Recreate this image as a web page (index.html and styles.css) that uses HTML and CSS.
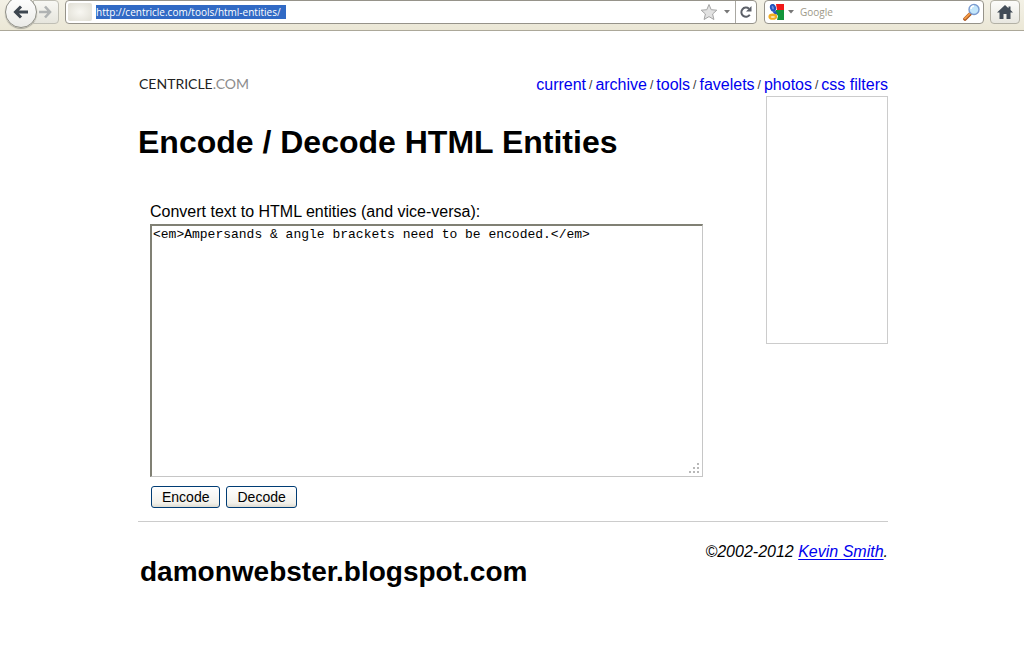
FILE: index.html
```html
<!DOCTYPE html>
<html lang="en">
<head>
<meta charset="utf-8">
<title>Encode / Decode HTML Entities</title>
<link rel="stylesheet" href="styles.css">
</head>
<body>
<div class="toolbar">
  <div class="history">
    <button class="back" type="button" aria-label="Back"><svg width="16" height="14" viewBox="0 0 16 14"><path d="M8 1.500 2.500 7 8 12.500M3 7h12" fill="none" stroke="#3d4650" stroke-width="3"/></svg></button>
    <button class="forward" type="button" aria-label="Forward"><svg width="14" height="14" viewBox="0 0 14 14"><path d="M7 1.500 12 7l-5 5.500M1 7h10.500" fill="none" stroke="#b0b3b3" stroke-width="2.600"/></svg></button>
  </div>
  <div class="address">
    <span class="identity"></span>
    <input class="url" type="text" aria-label="Address" value="http://centricle.com/tools/html-entities/">
    <button class="plain" type="button" aria-label="Bookmark"><svg width="18" height="18" viewBox="0 0 18 18"><path d="m9 1.500 2.200 5.200 5.600.5-4.200 3.800 1.300 5.500L9 13.600l-4.900 2.900L5.400 11 1.200 7.200l5.600-.5z" fill="#e2e2e2" stroke="#a5a5a5"/></svg></button>
    <button class="plain" type="button" aria-label="History"><svg width="6" height="4" viewBox="0 0 6 4"><path d="M0 0h6L3 3.500z" fill="#777"/></svg></button>
    <button class="plain reload" type="button" aria-label="Reload"><svg width="14" height="14" viewBox="0 0 14 14"><path d="M10 3.700A4.600 4.600 0 1 0 10.800 9.700" fill="none" stroke="#5c6068" stroke-width="2"/><path d="M12.500 1v5.500H7z" fill="#5c6068"/></svg></button>
  </div>
  <div class="search">
    <button class="plain engine" type="button" aria-label="Search engine"><svg width="16" height="16" viewBox="0 0 16 16"><path d="M8 0h8v6H9z" fill="#f11818"/><path d="M8 6h8v10H9l1-4-3-4z" fill="#12953b"/><ellipse cx="5" cy="3.800" rx="3" ry="3.900" transform="rotate(-18 5 3.800)" fill="#2453bd"/><ellipse cx="4.800" cy="3.600" rx="1" ry="2" transform="rotate(-18 4.800 3.600)" fill="#6f91dc"/><path d="m4.500 7.500 3-.5 2 3-2.500 1z" fill="#2453bd"/><ellipse cx="4.800" cy="12.700" rx="4.400" ry="3.100" fill="#f1ad20"/><ellipse cx="4.800" cy="12.900" rx="2.200" ry="1" fill="#fbe3ad"/></svg><svg width="6" height="4" viewBox="0 0 6 4"><path d="M0 0h6L3 3.500z" fill="#777"/></svg></button>
    <input class="query" type="text" aria-label="Search" placeholder="Google">
    <button class="plain go" type="button" aria-label="Go"><svg width="18" height="18" viewBox="0 0 18 18"><path d="m2 16 5-5" stroke="#a6521d" stroke-width="3.600" stroke-linecap="round"/><path d="m2 15.500 4.500-4.500" stroke="#f39a45" stroke-width="2" stroke-linecap="round"/><circle cx="11" cy="6.500" r="5" fill="#c3e6fb" stroke="#7b9bd0" stroke-width="1.400"/><path d="M8 6a3 3 0 0 1 3-3" fill="none" stroke="#fff" stroke-width="1.500"/></svg></button>
  </div>
  <button class="home" type="button" aria-label="Home"><svg width="16" height="14" viewBox="0 0 16 14"><path d="M8 0 0 7.500h2.500V14h4V9h3v5h4V7.500H16l-2.500-2.400V1.500h-2v1.700z" fill="#424c57"/></svg></button>
</div>
<div class="page">
  <header class="masthead">
    <div class="logo">CENTRICLE<span>.COM</span></div>
    <nav class="nav"><a href="#">current</a><i>/</i><a href="#">archive</a><i>/</i><a href="#">tools</a><i>/</i><a href="#">favelets</a><i>/</i><a href="#">photos</a><i>/</i><a href="#">css filters</a></nav>
  </header>
  <div class="columns">
    <main class="main">
      <h1>Encode / Decode HTML Entities</h1>
      <form class="form">
        <label for="text">Convert text to HTML entities (and vice-versa):</label>
        <div class="field">
          <textarea id="text" spellcheck="false">&lt;em&gt;Ampersands &amp; angle brackets need to be encoded.&lt;/em&gt;</textarea>
          <svg class="grip" width="11" height="11" viewBox="0 0 11 11"><path d="M8 0h2v2H8zM4 4h2v2H4zM8 4h2v2H8zM0 8h2v2H0zM4 8h2v2H4zM8 8h2v2H8z" fill="#b8b8b8"/></svg>
        </div>
        <div class="actions"><button type="button">Encode</button><button type="button">Decode</button></div>
      </form>
    </main>
    <aside class="ad"></aside>
  </div>
  <footer class="footer">
    <p class="credit">damonwebster.blogspot.com</p>
    <p class="copyright">©2002-2012 <a href="#">Kevin Smith</a>.</p>
  </footer>
</div>
</body>
</html>
```
FILE: styles.css
```css
* { box-sizing: border-box; }
body { margin: 0; background: #fff; color: #000; font: 16px/20px "Liberation Sans", Arial, sans-serif; }
button, input, textarea { margin: 0; font: inherit; }
svg { display: block; flex: none; }

.toolbar { display: flex; align-items: flex-start; height: 31px; padding: 0 4px 0 5px; background: linear-gradient(#f3f1e6, #ebe7d6); border-bottom: 1px solid #aca899; }
.history { display: flex; width: 54px; margin-right: 6px; }
.back { display: grid; place-items: center; z-index: 1; flex: none; width: 32px; height: 32px; margin-top: -4px; padding: 0; border: 1px solid #8e8e86; border-radius: 50%; background: linear-gradient(#fff, #ebebe8); box-shadow: 0 1px 1px #aaa89e; }
.forward { display: grid; place-items: center end; flex: none; width: 26px; height: 24px; margin-left: -4px; padding: 0 6px 0 0; border: 1px solid #c0bfb5; border-radius: 0 4px 4px 0; background: linear-gradient(#f8f8f4, #e6e5dd); }
.address, .search { display: flex; align-items: center; height: 24px; border: 1px solid #96938a; border-radius: 4px; background: #fff; }
.address { flex: 1; min-width: 0; padding-left: 2px; }
.identity { flex: none; width: 24px; height: 18px; margin-right: 4px; border-radius: 2px; background: radial-gradient(#f8f7f2, #e0ded4); }
.url, .query { flex: 1; min-width: 0; height: 16px; padding: 0; border: 0; outline: 0; background: transparent; font: 10px/14px "Open Sans", sans-serif; }
.url { flex: none; width: 190px; height: 14px; margin-right: auto; background: #316ac5; color: #fff; }
.query::placeholder { color: #9d9988; opacity: 1; }
.plain { display: flex; align-items: center; gap: 3px; flex: none; padding: 0 3px; border: 0; background: none; }
.reload { height: 22px; margin-left: 2px; border-left: 1px solid #aaa8a2; }
.search { width: 220px; margin: 0 6px 0 7px; }
.engine { gap: 4px; margin-right: 3px; }
.go { padding: 0 2px; }
.home { display: grid; place-items: center; width: 30px; height: 24px; padding: 0; border: 1px solid #b3b1a5; border-radius: 4px; background: linear-gradient(#fcfcfa, #e8e7e0); }

.page { max-width: 752px; margin: 0 auto; padding: 44px 0 0 2px; }
.masthead { display: flex; justify-content: space-between; height: 21px; }
.logo { padding-left: 1px; color: #222; font: 14px/18px Lato, sans-serif; }
.logo span { color: #8c8c8c; }
.nav { display: flex; gap: 3px; }
.nav a { color: #00e; text-decoration: none; }
.nav i { font-size: 12px; font-style: normal; color: #333; }
.columns { display: flex; justify-content: space-between; }
.main { flex: 1; }
h1 { margin: 27px 0 0; font-size: 32px; line-height: 38px; }
.form { max-width: 565px; padding: 41px 0 0 12px; }
.form label { display: block; }
.field { position: relative; margin-top: 2px; }
textarea { display: block; width: 100%; height: 253px; padding: 1px; border: 1px solid #c6c6c6; border-top: 2px solid #808074; border-left: 2px solid #808074; outline: 0; resize: none; background: #fff; color: #000; font: 13px/15px "Liberation Mono", monospace; }
.grip { position: absolute; right: 3px; bottom: 3px; }
.actions { display: flex; gap: 6px; padding: 9px 0 0 1px; }
.actions button { height: 22px; padding: 0 10px; border: 1px solid #003c74; border-radius: 3px; background: linear-gradient(#fff, #f2f1eb 80%, #dedbd0); color: #000; font-size: 14px; line-height: 18px; }
.ad { flex: none; width: 122px; height: 248px; border: 1px solid #ccc; }
.footer { display: flex; justify-content: space-between; margin-top: 13px; padding-top: 20px; border-top: 1px solid #ccc; }
.footer p { margin: 0; }
.credit { padding: 13px 0 0 2px; font-size: 28px; line-height: 34px; font-weight: bold; }
.copyright { font-style: italic; }
.copyright a { color: #00e; text-underline-offset: 2px; }
```
